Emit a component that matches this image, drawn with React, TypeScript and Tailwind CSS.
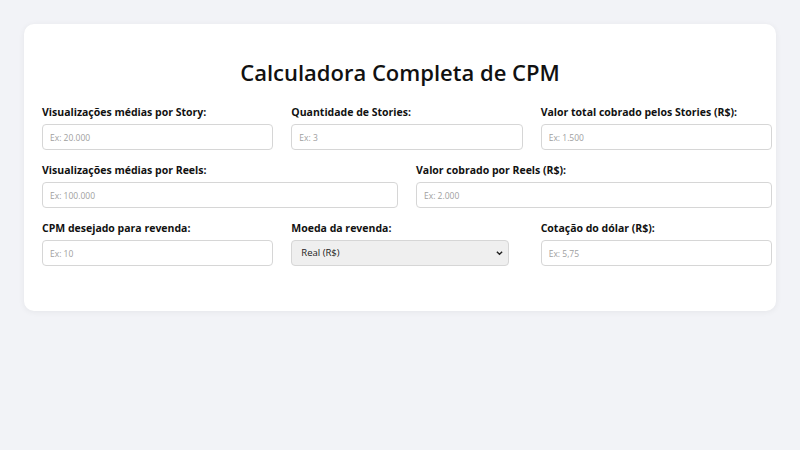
import React from "react";

const font = { fontFamily: '"Open Sans", "Noto Sans", sans-serif' };

function Field({ label, placeholder }: { label: string; placeholder: string }) {
  return (
    <div className="flex flex-col">
      <label className="text-[10.5px] font-bold text-[#111] leading-[14px] mb-[5px] whitespace-nowrap">{label}</label>
      <input
        placeholder={placeholder}
        className="block w-[calc(100%+14px)] h-[26px] px-[7px] text-[8.5px] border border-[#d6d6d6] rounded-[4px] bg-white placeholder:text-[#a0a0a0] outline-none"
      />
    </div>
  );
}

export default function App() {
  return (
    <div className="min-h-[450px] w-full bg-[#f2f3f7] pt-[24px] px-[24px]" style={font}>
      <div className="bg-white rounded-[10px] shadow-[0_1px_6px_rgba(0,0,0,0.06)] px-[18px] pt-[34px] pb-[45px]">
        <h1 className="text-center text-[22px] font-semibold text-[#111] leading-[28px] mb-[19px]">Calculadora Completa de CPM</h1>
        <div className="grid grid-cols-3 gap-x-[32px]">
          <Field label="Visualizações médias por Story:" placeholder="Ex: 20.000" />
          <Field label="Quantidade de Stories:" placeholder="Ex: 3" />
          <Field label="Valor total cobrado pelos Stories (R$):" placeholder="Ex: 1.500" />
        </div>
        <div className="grid grid-cols-2 gap-x-[32px] mt-[13px]">
          <Field label="Visualizações médias por Reels:" placeholder="Ex: 100.000" />
          <Field label="Valor cobrado por Reels (R$):" placeholder="Ex: 2.000" />
        </div>
        <div className="grid grid-cols-3 gap-x-[32px] mt-[13px]">
          <Field label="CPM desejado para revenda:" placeholder="Ex: 10" />
          <div className="flex flex-col">
            <label className="text-[10.5px] font-bold text-[#111] leading-[14px] mb-[5px] whitespace-nowrap">Moeda da revenda:</label>
            <div className="relative h-[26px]">
              <select className="block appearance-none w-full h-[26px] pl-[9px] text-[9.5px] text-[#222] border border-[#d6d6d6] rounded-[4px] bg-[#efefef] outline-none">
                <option>Real (R$)</option>
              </select>
              <svg className="absolute right-[6px] top-[10px] pointer-events-none" width="7" height="6" viewBox="0 0 8 6">
                <path d="M1 1.5 L4 4.5 L7 1.5" fill="none" stroke="#222" strokeWidth="1.6" />
              </svg>
            </div>
          </div>
          <Field label="Cotação do dólar (R$):" placeholder="Ex: 5,75" />
        </div>
      </div>
    </div>
  );
}
